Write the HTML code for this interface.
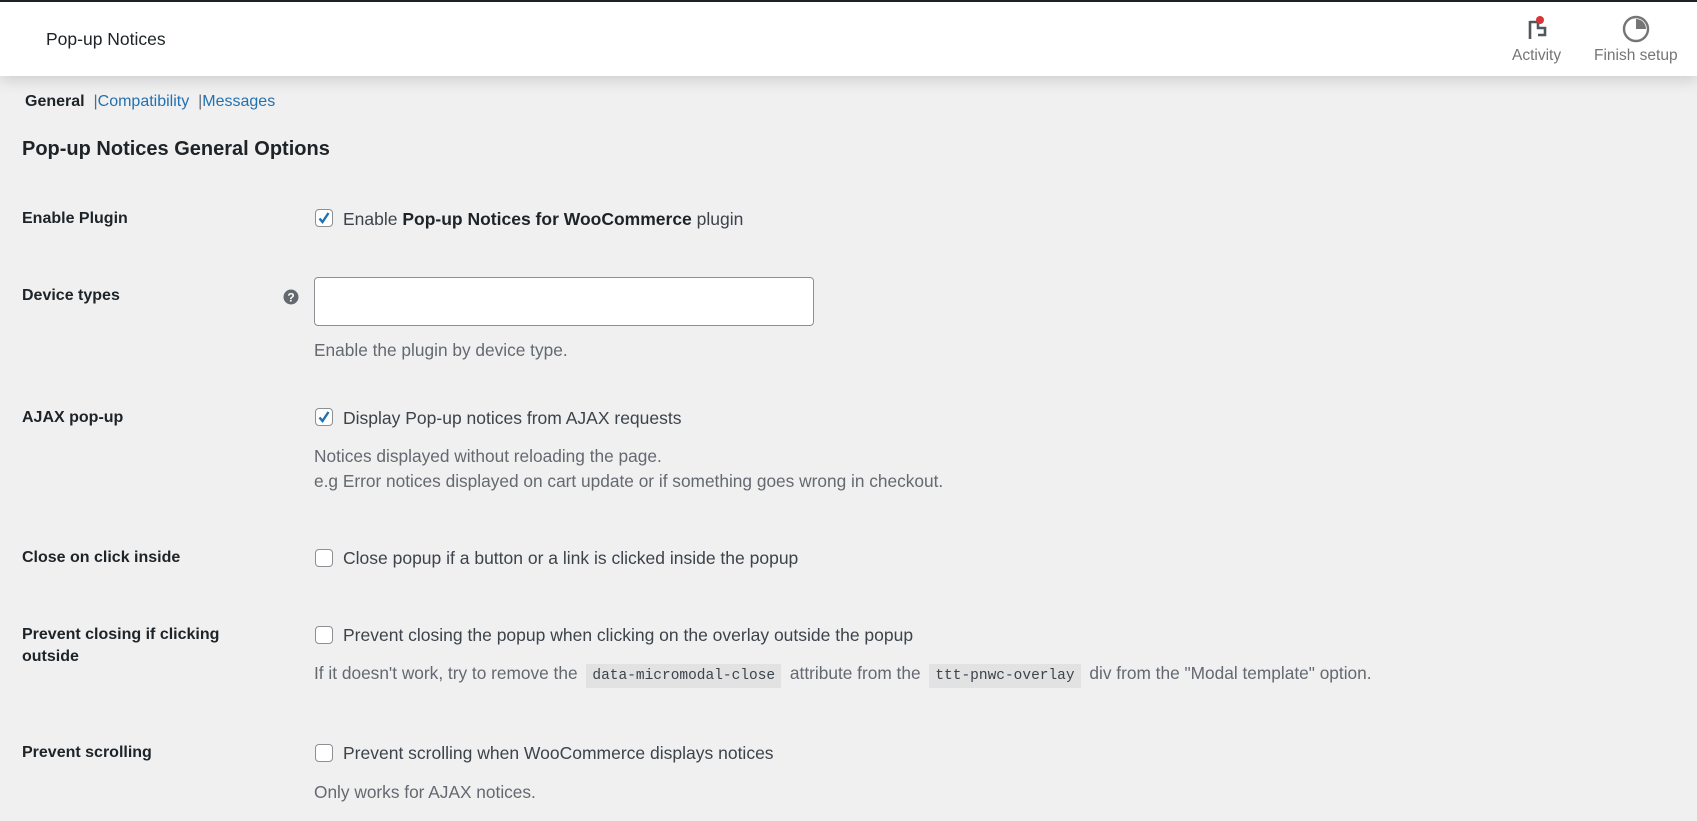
<!DOCTYPE html>
<html><head><meta charset="utf-8"><style>
*{box-sizing:border-box;margin:0;padding:0}
body{width:1697px;height:821px;overflow:hidden;background:#f0f0f1;font-family:"Liberation Sans",sans-serif;color:#1d2327;position:relative;font-size:15px}
.top{position:absolute;left:0;top:0;width:1697px;height:2px;background:#1d2327}
.hdr{position:absolute;left:0;top:2px;width:1697px;height:74px;background:#fff;box-shadow:0 4px 14px rgba(0,0,0,.15)}
.a{position:absolute}
.t{font-size:17.5px;color:#1d2327}
.lbl{position:absolute;left:22px;font-weight:bold;font-size:16px;color:#1d2327;line-height:22px}
.txt{position:absolute;left:343px;font-size:17.5px;color:#3c434a;line-height:22px;white-space:nowrap}
.desc{position:absolute;left:314px;font-size:17.3px;color:#646970;line-height:25px;white-space:nowrap}
.cb{position:absolute;left:315px;width:18px;height:18px;border:1px solid #8c8f94;border-radius:4px;background:#fff}
code{font-family:"Liberation Mono",monospace;font-size:14.5px;background:#e2e2e3;color:#3c434a;padding:4px 6px;margin:0 4px}
</style></head><body>
<div class="top"></div>
<div class="hdr">
<div class="a t" style="left:46px;top:27px">Pop-up Notices</div>
<svg class="a" style="left:1524px;top:12px" width="28" height="28" viewBox="0 0 28 28"><path d="M6 7v18M6 8h8v6h7v7h-7" fill="none" stroke="#50575e" stroke-width="2.6"/><circle cx="16" cy="6" r="4" fill="#d63638"/></svg>
<div class="a" style="left:1512px;top:45px;font-size:15.5px;color:#757575">Activity</div>
<svg class="a" style="left:1621px;top:12px" width="30" height="30" viewBox="0 0 30 30"><circle cx="15" cy="15" r="12" fill="none" stroke="#757575" stroke-width="2.4"/><path d="M15 5a10 10 0 0 1 10 10h-10z" fill="#757575"/></svg>
<div class="a" style="left:1594px;top:45px;font-size:15.5px;color:#757575">Finish setup</div>
</div>
<div class="a" style="left:25px;top:92px;font-size:16px;line-height:20px;white-space:nowrap"><b style="color:#1d2327">General</b> &nbsp;<span style="color:#646970">|</span><span style="color:#2271b1">Compatibility</span> &nbsp;<span style="color:#646970">|</span><span style="color:#2271b1">Messages</span></div>
<div class="a" style="left:22px;top:138px;font-size:20px;font-weight:bold;color:#1d2327">Pop-up Notices General Options</div>

<div class="lbl" style="top:208px">Enable Plugin</div>
<div class="cb" style="top:209px"><svg width="16" height="16" viewBox="0 0 16 16" style="position:absolute;left:0;top:0"><path d="M3.5 8.5l3 3.5 6-9" fill="none" stroke="#2271b1" stroke-width="2.4"/></svg></div>
<div class="txt" style="top:208px">Enable <b style="color:#1d2327">Pop-up Notices for WooCommerce</b> plugin</div>

<div class="lbl" style="top:285px">Device types</div>
<svg class="a" style="left:283px;top:289px" width="16" height="16" viewBox="0 0 16 16"><circle cx="8" cy="8" r="7.5" fill="#646970"/><text x="8" y="12.5" font-size="12" font-weight="bold" fill="#fff" text-anchor="middle" font-family="Liberation Sans">?</text></svg>
<div class="a" style="left:314px;top:277px;width:500px;height:49px;background:#fff;border:1px solid #8c8f94;border-radius:4px"></div>
<div class="desc" style="top:338px">Enable the plugin by device type.</div>

<div class="lbl" style="top:407px">AJAX pop-up</div>
<div class="cb" style="top:408px"><svg width="16" height="16" viewBox="0 0 16 16" style="position:absolute;left:0;top:0"><path d="M3.5 8.5l3 3.5 6-9" fill="none" stroke="#2271b1" stroke-width="2.4"/></svg></div>
<div class="txt" style="top:407px">Display Pop-up notices from AJAX requests</div>
<div class="desc" style="top:444px">Notices displayed without reloading the page.</div>
<div class="desc" style="top:469px">e.g Error notices displayed on cart update or if something goes wrong in checkout.</div>

<div class="lbl" style="top:547px">Close on click inside</div>
<div class="cb" style="top:549px"></div>
<div class="txt" style="top:547px">Close popup if a button or a link is clicked inside the popup</div>

<div class="lbl" style="top:624px">Prevent closing if clicking<br>outside</div>
<div class="cb" style="top:626px"></div>
<div class="txt" style="top:624px">Prevent closing the popup when clicking on the overlay outside the popup</div>
<div class="desc" style="top:661px">If it doesn't work, try to remove the <code>data-micromodal-close</code> attribute from the <code>ttt-pnwc-overlay</code> div from the "Modal template" option.</div>

<div class="lbl" style="top:742px">Prevent scrolling</div>
<div class="cb" style="top:744px"></div>
<div class="txt" style="top:742px">Prevent scrolling when WooCommerce displays notices</div>
<div class="desc" style="top:780px">Only works for AJAX notices.</div>
</body></html>
